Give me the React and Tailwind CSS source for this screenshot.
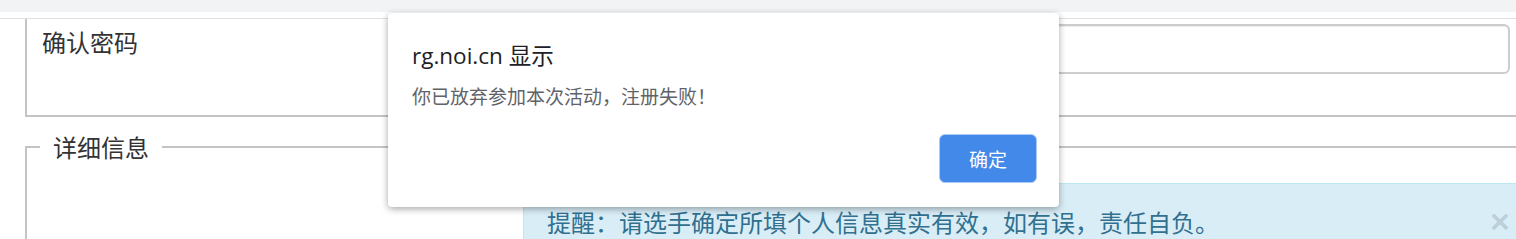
export default function App() {
  return (
    <div className="relative w-[1516px] h-[239px] overflow-hidden bg-white text-[#333] font-['Noto_Sans_CJK_SC',sans-serif]">
      <div className="h-[12px] bg-[#f1f3f4]" />
      <div className="h-[6px]" />
      <div className="h-px bg-[#e0e0e0]" />
      <div className="pl-[25px]">
        <div className="flex h-[98px] border-l-2 border-b-2 border-[#c4c4c4]">
          <div className="w-[380px] shrink-0 pl-[15px] pt-[6px] text-[24px] leading-[34px]">确认密码</div>
          <div className="flex-1 pt-[5px] pr-[6px]">
            <div className="h-[50px] rounded-[6px] border-2 border-[#cdcdcd] shadow-[inset_0_1px_1px_rgba(0,0,0,0.075)]" />
          </div>
        </div>
        <fieldset className="mt-[15px] w-[1520px] border-2 border-[#c4c4c4] h-[140px]">
          <legend className="ml-[13px] px-[13px] text-[24px] leading-[30px]">详细信息</legend>
          <div className="mt-[21px] ml-[496px]">
            <div className="flex items-start border border-[#bce8f1] bg-[#d9edf7] pl-[23px] pt-[21px] text-[#31708f]">
              <span className="text-[24px] leading-[34px]">提醒：请选手确定所填个人信息真实有效，如有误，责任自负。</span>
              <span className="ml-auto mr-[34px] mt-[1px] w-[18px] text-center font-['Liberation_Sans',sans-serif] text-[34px] font-bold leading-[30px] text-black/15">×</span>
            </div>
          </div>
        </fieldset>
      </div>

      <div className="absolute left-[388px] top-[13px] flex h-[194px] w-[671px] flex-col rounded-[4px] bg-white pl-[24px] pt-[29px] shadow-[0_2px_7px_rgba(0,0,0,0.35)]">
        <div className="font-['Open_Sans','Noto_Sans_CJK_SC',sans-serif] text-[22.5px] leading-[28px] text-[#202124]">rg.noi.cn 显示</div>
        <div className="mt-[13px] text-[19px] leading-[26px] text-[#5f6368]">你已放弃参加本次活动，注册失败！</div>
        <button className="mt-auto mb-[24px] mr-[22px] flex h-[49px] w-[98px] items-center justify-center self-end rounded-[6px] border border-[#a9c9f7] bg-[#4289ea] text-[19px] leading-none text-white">确定</button>
      </div>
    </div>
  );
}
